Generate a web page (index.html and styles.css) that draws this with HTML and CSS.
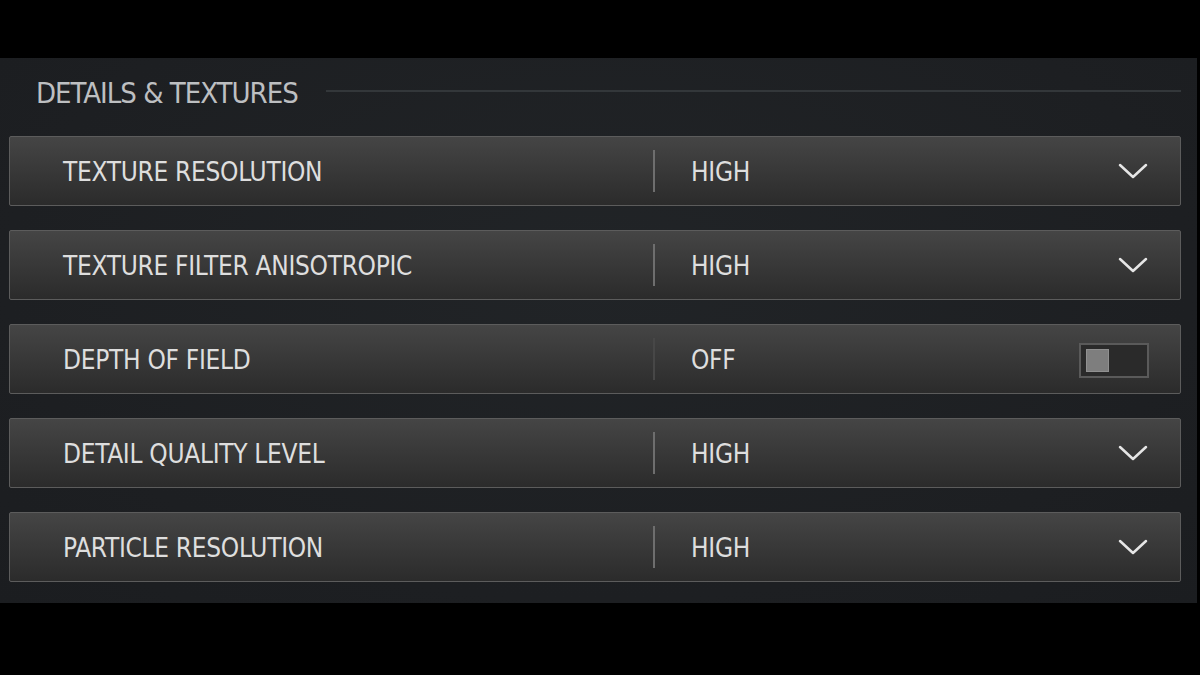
FILE: index.html
```html
<!DOCTYPE html>
<html>
<head>
<meta charset="utf-8">
<link rel="stylesheet" href="styles.css">
</head>
<body>
<div class="screen">
  <div class="band"></div>
  <section class="panel">
    <header class="section-head">
      <h2 class="section-title">DETAILS &amp; TEXTURES</h2>
      <div class="section-rule"></div>
    </header>
    <div class="rows">
      <div class="row">
        <div class="label">TEXTURE RESOLUTION</div>
        <div class="divider"></div>
        <div class="value">HIGH</div>
        <svg class="chevron" viewBox="0 0 30 16"><path d="M2 2 L15 14 L28 2" fill="none" stroke="#e6e6e6" stroke-width="2.5" stroke-linecap="round" stroke-linejoin="round"/></svg>
      </div>
      <div class="row">
        <div class="label">TEXTURE FILTER ANISOTROPIC</div>
        <div class="divider"></div>
        <div class="value">HIGH</div>
        <svg class="chevron" viewBox="0 0 30 16"><path d="M2 2 L15 14 L28 2" fill="none" stroke="#e6e6e6" stroke-width="2.5" stroke-linecap="round" stroke-linejoin="round"/></svg>
      </div>
      <div class="row">
        <div class="label">DEPTH OF FIELD</div>
        <div class="divider dim"></div>
        <div class="value">OFF</div>
        <div class="toggle"><div class="knob"></div></div>
      </div>
      <div class="row">
        <div class="label">DETAIL QUALITY LEVEL</div>
        <div class="divider"></div>
        <div class="value">HIGH</div>
        <svg class="chevron" viewBox="0 0 30 16"><path d="M2 2 L15 14 L28 2" fill="none" stroke="#e6e6e6" stroke-width="2.5" stroke-linecap="round" stroke-linejoin="round"/></svg>
      </div>
      <div class="row">
        <div class="label">PARTICLE RESOLUTION</div>
        <div class="divider"></div>
        <div class="value">HIGH</div>
        <svg class="chevron" viewBox="0 0 30 16"><path d="M2 2 L15 14 L28 2" fill="none" stroke="#e6e6e6" stroke-width="2.5" stroke-linecap="round" stroke-linejoin="round"/></svg>
      </div>
    </div>
  </section>
</div>
</body>
</html>
```
FILE: styles.css
```css
html, body {
  margin: 0;
  padding: 0;
  background: #000;
}
.screen {
  width: 1200px;
  height: 675px;
  background: #000;
  font-family: "DejaVu Sans Condensed", "DejaVu Sans", sans-serif;
}
.band {
  height: 58px;
}
.panel {
  width: 1197px;
  height: 545px;
  background: #1e2023;
  background-image: radial-gradient(ellipse at 50% 40%, #212427 0%, #1d1f22 70%, #1b1d20 100%);
  box-sizing: border-box;
}
.section-head {
  height: 70px;
  display: flex;
  align-items: center;
  padding-left: 36px;
  padding-right: 16px;
  margin-bottom: 8px;
}
.section-title {
  margin: 0;
  font-weight: normal;
  font-size: 29px;
  letter-spacing: -1px;
  color: #bdbfc1;
  white-space: nowrap;
}
.section-rule {
  flex: 1;
  height: 2px;
  background: #33373a;
  margin-left: 28px;
  margin-top: -4px;
}
.rows {
  display: flex;
  flex-direction: column;
  gap: 24px;
  padding-left: 9px;
}
.row {
  width: 1172px;
  height: 70px;
  box-sizing: border-box;
  border: 1px solid #5c5c5c;
  border-radius: 2px;
  background: linear-gradient(to bottom, #454545 0%, #383838 50%, #2b2b2b 100%);
  display: flex;
  align-items: center;
  padding-right: 33px;
}
.label {
  width: 643px;
  box-sizing: border-box;
  padding-left: 53px;
  padding-top: 2px;
  font-size: 26px;
  letter-spacing: -0.3px;
  color: #dedede;
  white-space: nowrap;
}
.divider {
  width: 2px;
  height: 42px;
  background: #6e6e6e;
}
.divider.dim {
  background: #474747;
}
.value {
  flex: 1;
  padding-left: 36px;
  padding-top: 2px;
  font-size: 26px;
  letter-spacing: -0.3px;
  color: #dedede;
}
.chevron {
  width: 30px;
  height: 16px;
  margin-right: -1px;
}
.toggle {
  width: 70px;
  height: 35px;
  box-sizing: border-box;
  border: 2px solid #5a5a5a;
  background: #2a2a2a;
  padding: 4px 5px;
  margin-right: -2px;
  margin-top: 2px;
}
.knob {
  width: 23px;
  height: 23px;
  box-sizing: border-box;
  background: #7e7e7e;
  border: 1px solid #909090;
}
```
